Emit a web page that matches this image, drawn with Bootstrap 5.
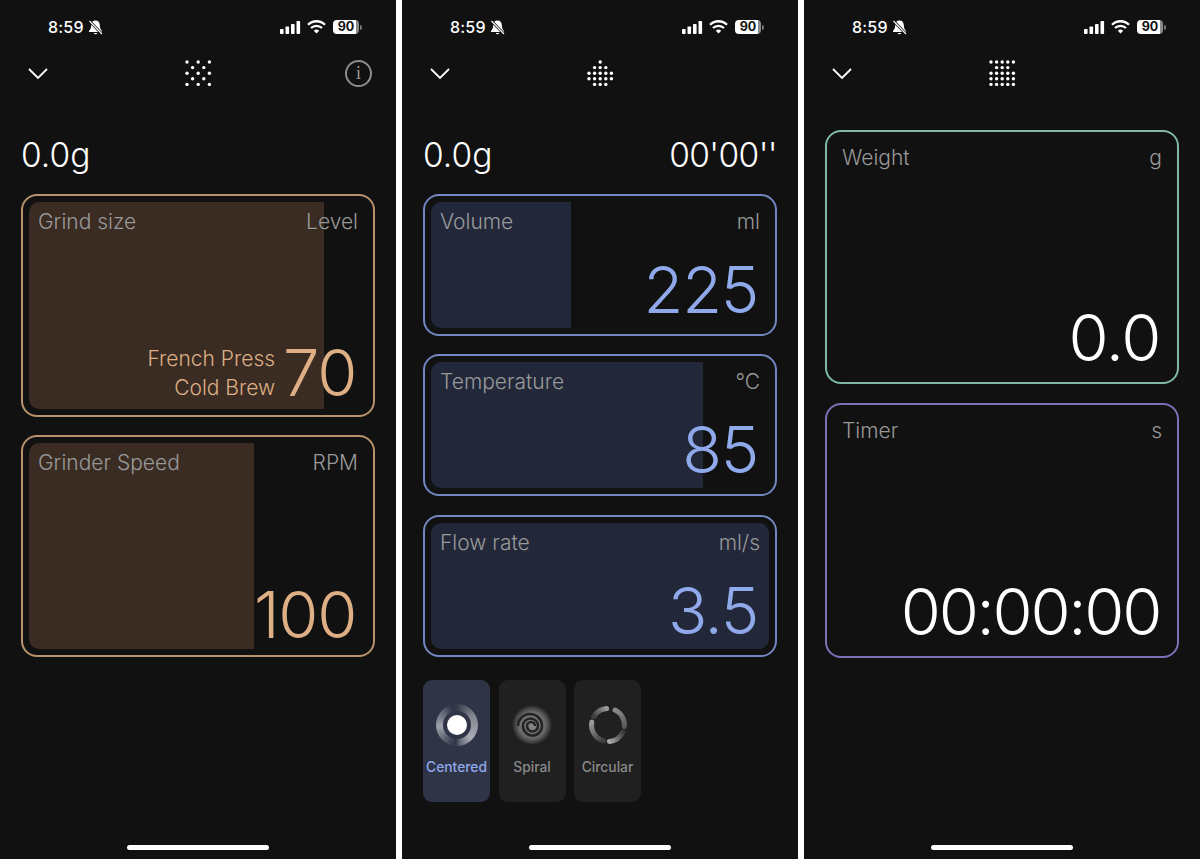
<!DOCTYPE html>
<html lang="en">
<head>
    <meta charset="UTF-8">
    <meta name="viewport" content="width=device-width, initial-scale=1.0">
    <title>Brew Controls</title>
    <link href="https://cdn.jsdelivr.net/npm/bootstrap@5.3.3/dist/css/bootstrap.min.css" rel="stylesheet">
    <style>
        html, body {
            height: 100%;
            margin: 0;
        }

        body {
            background: #fff;
            font-family: "Inter", "Liberation Sans", sans-serif;
            overflow: hidden;
        }

        .screens {
            width: 1200px;
            height: 859px;
            gap: 6px;
        }

        .screen {
            width: 396px;
            height: 859px;
            background: #111;
            color: #fff;
            padding: 0 21px;
        }

        .status-bar {
            height: 54px;
            padding: 0 13px 0 27px;
        }

        .status-time {
            font-size: 16px;
            font-weight: 500;
            letter-spacing: .2px;
        }

        .battery {
            width: 26px;
            height: 14px;
            border-radius: 4px;
            background: linear-gradient(90deg, #fff 90%, #8a8a8a 90%);
            color: #111;
            font-size: 12.5px;
            font-weight: 700;
            line-height: 14px;
            text-align: center;
        }

        .battery-nub {
            width: 2px;
            height: 5px;
            margin-left: 1px;
            background: #777;
            border-radius: 0 2px 2px 0;
        }

        .gap-signal {
            margin-right: 6px;
        }

        .gap-wifi {
            margin-right: 7px;
        }

        .top-bar {
            height: 38px;
            padding: 0 3px;
        }

        .top-side {
            flex: 1 1 0;
        }

        .chevron {
            margin-bottom: 2px;
        }

        .info-btn {
            width: 27px;
            height: 27px;
            border: 2px solid #8d8d8d;
            border-radius: 50%;
            color: #9a9a9a;
            font-family: "Liberation Serif", serif;
            font-size: 18px;
            line-height: 22px;
            text-align: center;
        }

        .readout {
            margin-top: 33px;
            height: 60px;
            margin-bottom: 8.5px;
            font-size: 33.5px;
            font-weight: 300;
            line-height: 60px;
        }

        .readout-time {
            letter-spacing: -.6px;
        }

        .stack-top {
            margin-top: 38px;
        }

        .tile {
            position: relative;
            border: 2px solid;
            border-radius: 16px;
            margin-bottom: 18.5px;
        }

        .tile-track {
            position: absolute;
            inset: 6px;
            border-radius: 10px;
            overflow: hidden;
        }

        .tile-fill {
            height: 100%;
        }

        .tile-body {
            position: relative;
            height: 100%;
            padding: 11px 15px 0;
        }

        .tile-label {
            font-size: 21px;
            line-height: 30px;
            font-weight: 300;
            color: #999;
        }

        .tile-value {
            font-size: 65px;
            line-height: 64px;
            font-weight: 300;
            letter-spacing: -1.3px;
            margin-right: 2px;
        }

        .tile-note {
            font-size: 21px;
            font-weight: 300;
            line-height: 29px;
            text-align: right;
            margin-right: 8px;
            margin-bottom: 13px;
        }

        .h-grind { height: 223px; }
        .h-speed { height: 222px; }
        .h-brew { height: 142px; }
        .h-weight { height: 254px; }
        .h-timer { height: 255px; }

        .tan { border-color: #b8926c; }
        .tan .tile-fill { background: #3a2c23; }
        .tan .tile-value, .tan .tile-note { color: #deae84; }

        .blue { border-color: #7286c2; }
        .blue .tile-fill { background: #22283a; }
        .blue .tile-value { color: #8fa9ea; }

        .teal { border-color: #7fb8aa; }
        .purple { border-color: #7f6fb6; }
        .teal .tile-value, .purple .tile-value { color: #fff; }
        .purple .tile-value { letter-spacing: -2.3px; }

        .thumbs {
            margin-top: 23.5px;
            gap: 8.5px;
        }

        .thumb {
            width: 67px;
            height: 122px;
            border-radius: 9px;
            background: #202020;
            color: #8a8a8a;
            font-size: 13.8px;
            font-weight: 500;
            padding-top: 24px;
        }

        .thumb.is-active {
            background: #2f3446;
            color: #8fa9ea;
        }

        .thumb-icon {
            width: 42px;
            height: 42px;
            margin-bottom: 11px;
        }

        .ring-centered {
            position: relative;
            border-radius: 50%;
            background: conic-gradient(#363b4c 0deg, #83868f 60deg, #a9acb5 135deg, #6b6f7d 168deg, #2f3446 184deg, #454a59 205deg, #a0a3ad 265deg, #646877 310deg, #2f3446 345deg, #363b4c 360deg);
        }

        .ring-centered::before {
            content: "";
            position: absolute;
            inset: 7px;
            border-radius: 50%;
            background: #2f3446;
        }

        .ring-centered::after {
            content: "";
            position: absolute;
            inset: 11px;
            border-radius: 50%;
            background: #fff;
        }

        .home-bar {
            position: absolute;
            left: 50%;
            bottom: 9px;
            width: 142px;
            height: 5px;
            margin-left: -71px;
            background: #fff;
            border-radius: 3px;
        }
    </style>
</head>
<body>
    <div class="screens d-flex" id="screens"></div>

    <script>
        // status bar, same on all three phones
        const statusBar = `
            <div class="status-bar d-flex align-items-center justify-content-between">
                <div class="d-flex align-items-center gap-1">
                    <span class="status-time">8:59</span>
                    <svg width="15" height="15" viewBox="0 0 15 15">
                        <path d="M7.500 .5c-2.700 0-4.300 1.900-4.300 4.600 0 3-.8 4.300-2.200 5.800v1h13v-1c-1.400-1.500-2.200-2.800-2.200-5.800C11.800 2.400 10.200 .5 7.500 .5z" fill="#fff"/>
                        <path d="M5.700 13a1.900 1.900 0 0 0 3.600 0z" fill="#fff"/>
                        <path d="M1.500 1l12.500 13" stroke="#111" stroke-width="2.600"/>
                        <path d="M1.500 1l12.500 13" stroke="#fff" stroke-width="1.100"/>
                    </svg>
                </div>
                <div class="d-flex align-items-center">
                    <svg width="21" height="13" viewBox="0 0 21 13" class="gap-signal">
                        <rect x="0" y="8" width="3.600" height="5" rx=".8" fill="#fff"/>
                        <rect x="5.500" y="5.500" width="3.600" height="7.500" rx=".8" fill="#fff"/>
                        <rect x="11" y="3" width="3.600" height="10" rx=".8" fill="#fff"/>
                        <rect x="16.500" y="0" width="3.600" height="13" rx=".8" fill="#fff"/>
                    </svg>
                    <svg width="19" height="14" viewBox="0 0 19 14" class="gap-wifi" fill="none" stroke="#fff" stroke-width="2.300">
                        <path d="M1 4.800a12 12 0 0 1 17 0"/>
                        <path d="M4 8a8 8 0 0 1 11 0"/>
                        <path d="M9.500 13.500L6.800 10.800a4 4 0 0 1 5.400 0z" fill="#fff" stroke="none"/>
                    </svg>
                    <div class="battery">90</div>
                    <div class="battery-nub"></div>
                </div>
            </div>`;

        const chevron = `<svg width="20" height="11" viewBox="0 0 20 11" fill="none" stroke="#fff" stroke-width="1.800" class="chevron ms-1"><path d="M1 1l9 9 9-9"/></svg>`;

        // which dots are lit in the 5x5 mode icon
        function dotIcon(rows) {
            let dots = '';
            rows.forEach((row, y) => {
                [...row].forEach((cell, x) => {
                    if (cell === '#') {
                        dots += `<circle cx="${3 + x * 5.6}" cy="${3 + y * 5.6}" r="1.700" fill="#fff"/>`;
                    }
                });
            });
            return `<svg width="28" height="28" viewBox="0 0 28 28">${dots}</svg>`;
        }

        function topBar(rows, withInfo) {
            return `
                <div class="top-bar d-flex align-items-center">
                    <div class="top-side">${chevron}</div>
                    ${dotIcon(rows)}
                    <div class="top-side d-flex justify-content-end">
                        ${withInfo ? '<div class="info-btn">i</div>' : ''}
                    </div>
                </div>`;
        }

        function tile(t) {
            return `
                <div class="tile ${t.tone} ${t.height}">
                    <div class="tile-track">
                        <div class="tile-fill" style="width:${t.fill}%"></div>
                    </div>
                    <div class="tile-body d-flex flex-column justify-content-between">
                        <div class="d-flex justify-content-between tile-label">
                            <span>${t.label}</span><span>${t.unit}</span>
                        </div>
                        <div class="d-flex justify-content-end align-items-end">
                            ${t.note ? `<div class="tile-note">${t.note}</div>` : ''}
                            <div class="tile-value" style="margin-bottom:${t.drop}px">${t.value}</div>
                        </div>
                    </div>
                </div>`;
        }

        const spiralIcon = `
            <svg class="thumb-icon" viewBox="0 0 42 42" fill="none">
                <defs>
                    <radialGradient id="spiralGlow">
                        <stop offset="0" stop-color="#8a8a8a"/>
                        <stop offset=".65" stop-color="#6a6a6a"/>
                        <stop offset=".85" stop-color="#444"/>
                        <stop offset="1" stop-color="#202020"/>
                    </radialGradient>
                </defs>
                <circle cx="21" cy="21" r="20" fill="url(#spiralGlow)"/>
                <path d="M24 22A4 4 0 0 0 16 22A5.500 5.500 0 0 0 27 22A7.500 7.500 0 0 0 12 22A9.500 9.500 0 0 0 31 22A12 12 0 0 0 7 22" stroke="#252525" stroke-width="2.600"/>
            </svg>`;

        const circularIcon = `
            <svg class="thumb-icon" viewBox="0 0 42 42" fill="none" stroke-width="5" stroke-linecap="round">
                <defs>
                    <linearGradient id="arcA" gradientUnits="userSpaceOnUse" x1="6.700" y1="12.800" x2="19.600" y2="4.600">
                        <stop offset="0" stop-color="#3c3c3c"/><stop offset="1" stop-color="#9a9a9a"/>
                    </linearGradient>
                    <linearGradient id="arcB" gradientUnits="userSpaceOnUse" x1="28" y1="6" x2="37.400" y2="22.400">
                        <stop offset="0" stop-color="#8a8a8a"/><stop offset="1" stop-color="#5a5a5a"/>
                    </linearGradient>
                    <linearGradient id="arcC" gradientUnits="userSpaceOnUse" x1="36" y1="28" x2="22.400" y2="37.400">
                        <stop offset="0" stop-color="#3a3a3a"/><stop offset="1" stop-color="#a8a8a8"/>
                    </linearGradient>
                    <linearGradient id="arcD" gradientUnits="userSpaceOnUse" x1="16.700" y1="36.900" x2="4.800" y2="18.100">
                        <stop offset="0" stop-color="#3c3c3c"/><stop offset="1" stop-color="#9a9a9a"/>
                    </linearGradient>
                </defs>
                <path d="M6.700 12.800A16.500 16.500 0 0 1 19.600 4.600" stroke="url(#arcA)"/>
                <path d="M28 6A16.500 16.500 0 0 1 37.400 22.400" stroke="url(#arcB)"/>
                <path d="M36 28A16.500 16.500 0 0 1 22.400 37.400" stroke="url(#arcC)"/>
                <path d="M16.700 36.900A16.500 16.500 0 0 1 4.800 18.100" stroke="url(#arcD)"/>
            </svg>`;

        const screens = [
            {
                dots: ['#.#.#', '.#.#.', '#.#.#', '.#.#.', '#.#.#'],
                info: true,
                left: '0.0g',
                right: '',
                tiles: [
                    { tone: 'tan', height: 'h-grind', fill: 87.3, label: 'Grind size', unit: 'Level', value: '70', drop: 10, note: 'French Press<br>Cold Brew' },
                    { tone: 'tan', height: 'h-speed', fill: 66.6, label: 'Grinder Speed', unit: 'RPM', value: '100', drop: 8 }
                ]
            },
            {
                dots: ['..#..', '.###.', '#####', '#####', '.###.'],
                left: '0.0g',
                right: "00'00''",
                tiles: [
                    { tone: 'blue', height: 'h-brew', fill: 41.4, label: 'Volume', unit: 'ml', value: '225', drop: 12 },
                    { tone: 'blue', height: 'h-brew', fill: 80.5, label: 'Temperature', unit: '°C', value: '85', drop: 12 },
                    { tone: 'blue', height: 'h-brew', fill: 100, label: 'Flow rate', unit: 'ml/s', value: '3.5', drop: 12 }
                ],
                thumbs: true
            },
            {
                dots: ['#####', '.###.', '#####', '#####', '#####'],
                tiles: [
                    { tone: 'teal', height: 'h-weight', fill: 0, label: 'Weight', unit: 'g', value: '0.0', drop: 12 },
                    { tone: 'purple', height: 'h-timer', fill: 0, label: 'Timer', unit: 's', value: '00:00:00', drop: 12 }
                ]
            }
        ];

        const thumbs = `
            <div class="thumbs d-flex">
                <div class="thumb is-active d-flex flex-column align-items-center">
                    <div class="thumb-icon ring-centered"></div><span>Centered</span>
                </div>
                <div class="thumb d-flex flex-column align-items-center">${spiralIcon}<span>Spiral</span></div>
                <div class="thumb d-flex flex-column align-items-center">${circularIcon}<span>Circular</span></div>
            </div>`;

        document.getElementById('screens').innerHTML = screens.map(s => `
            <div class="screen position-relative flex-shrink-0">
                ${statusBar}
                ${topBar(s.dots, s.info)}
                ${s.left ? `<div class="readout d-flex justify-content-between"><span>${s.left}</span><span class="readout-time">${s.right}</span></div>` : '<div class="stack-top"></div>'}
                ${s.tiles.map(tile).join('')}
                ${s.thumbs ? thumbs : ''}
                <div class="home-bar"></div>
            </div>`).join('');
    </script>
    <script src="https://cdn.jsdelivr.net/npm/bootstrap@5.3.3/dist/js/bootstrap.bundle.min.js"></script>
</body>
</html>
